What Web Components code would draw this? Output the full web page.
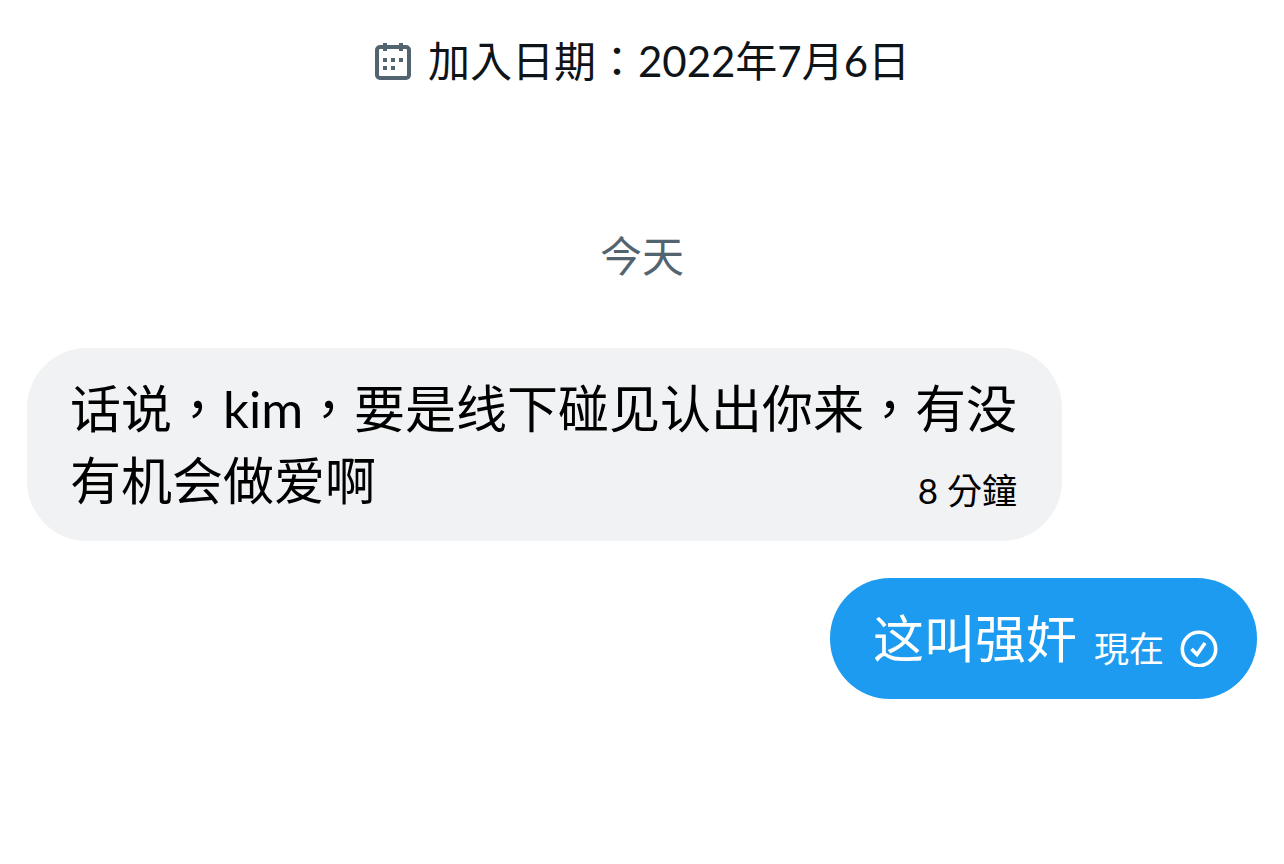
<!DOCTYPE html>
<html lang="zh-Hant">
<head>
<meta charset="utf-8">
<meta name="viewport" content="width=device-width, initial-scale=1">
<title>訊息</title>
<style>
  body { margin: 0; background: #fff; }
</style>
</head>
<body>
<chat-thread>
  <join-date slot="header">加入日期：2022年7月6日</join-date>
  <day-label>今天</day-label>
  <chat-message time="8 分鐘">话说，kim，要是线下碰见认出你来，有没有机会做爱啊</chat-message>
  <chat-message sent time="現在">这叫强奸</chat-message>
</chat-thread>

<script>
  const define = (name, html, setup) => {
    const template = document.createElement('template');
    template.innerHTML = html;
    customElements.define(name, class extends HTMLElement {
      connectedCallback() {
        if (this.shadowRoot) return;
        this.attachShadow({ mode: 'open' }).append(template.content.cloneNode(true));
        if (setup) setup(this, this.shadowRoot);
      }
    });
  };

  define('chat-thread', `
    <style>
      :host {
        display: block;
        padding: 31px 27px;
        font-family: Lato, "Noto Sans CJK TC", sans-serif;
        color: #0f1419;
      }
      header { margin-bottom: 135px; }
      main { display: flex; flex-direction: column; }
    </style>
    <header><slot name="header"></slot></header>
    <main><slot></slot></main>
  `);

  define('join-date', `
    <style>
      :host {
        display: flex;
        justify-content: center;
        align-items: center;
        gap: 16px;
        font-size: 42px;
        line-height: 60px;
      }
      svg { width: 38px; height: 38px; color: #536471; }
    </style>
    <svg viewBox="0 0 38 38" fill="none" stroke="currentColor" aria-hidden="true">
      <rect x="3" y="5" width="32" height="31" rx="3" stroke-width="4"/>
      <path d="M11 1v8M27 1v8" stroke-width="4"/>
      <path d="M9 18h4m4 0h4m4 0h4M9 26h4m4 0h4" stroke-width="4"/>
    </svg>
    <span><slot></slot></span>
  `);

  define('day-label', `
    <style>
      :host {
        display: block;
        margin-bottom: 62px;
        text-align: center;
        font-size: 42px;
        line-height: 60px;
        color: #536471;
      }
    </style>
    <slot></slot>
  `);

  define('chat-message', `
    <style>
      :host { display: flex; margin-bottom: 37px; }
      :host([sent]) { justify-content: flex-end; }
      .bubble {
        display: flow-root;
        box-sizing: border-box;
        max-width: 1035px;
        padding: 25px 39px 24px 43px;
        border-radius: 60px;
        background: #f0f2f4;
        color: #000;
        font-size: 51px;
        line-height: 72px;
      }
      .meta {
        float: right;
        display: flex;
        align-items: center;
        gap: 16px;
        height: 52px;
        margin: 19px 6px 0 17px;
        font-size: 35px;
        line-height: 52px;
      }
      svg { display: none; width: 38px; height: 38px; }
      :host([sent]) .bubble { background: #1d9bf0; color: #fff; }
      :host([sent]) .meta { margin-right: 0; }
      :host([sent]) svg { display: block; }
    </style>
    <div class="bubble">
      <slot></slot>
      <span class="meta">
        <time></time>
        <svg viewBox="0 0 38 38" fill="none" stroke="currentColor" aria-hidden="true">
          <circle cx="19" cy="20" r="16.7" stroke-width="3.6"/>
          <path d="M11.5 20l5.5 5.500 8-11.500" stroke-width="3.6"/>
        </svg>
      </span>
    </div>
  `, (host, root) => {
    root.querySelector('time').textContent = host.getAttribute('time');
  });
</script>
</body>
</html>
